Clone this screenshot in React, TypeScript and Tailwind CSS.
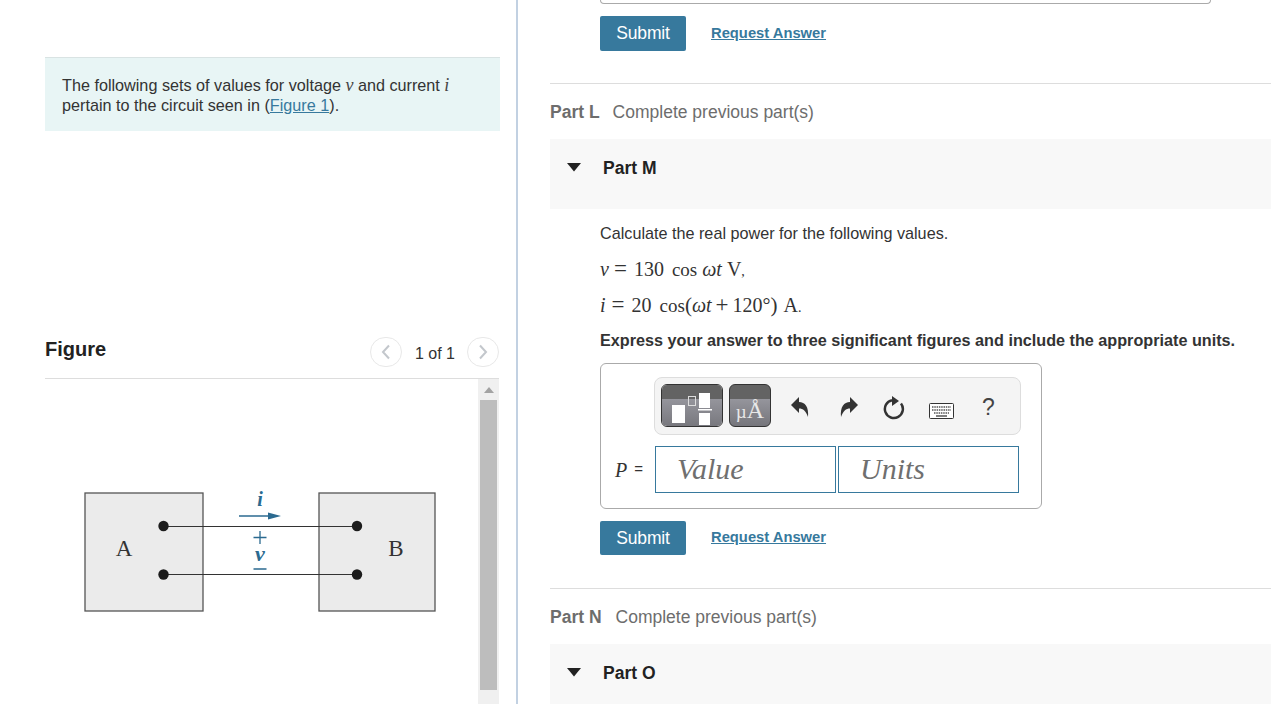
import React from "react";

const serif = "font-['Liberation_Serif',serif]";

const Actions: React.FC<{ btn: string; link: string }> = ({ btn, link }) => (
  <div className="flex items-start">
    <button className={`${btn} w-[86px] rounded-[2px] bg-[#37799d] text-[17.500px] tracking-[-0.2px] text-white`}>Submit</button>
    <a href="#" className={`${link} ml-[25px] text-[14.750px] font-bold text-[#37799d] underline`}>Request Answer</a>
  </div>
);

const LockedPart: React.FC<{ part: string; gap: string }> = ({ part, gap }) => (
  <div className="flex h-[56px] items-center border-t border-[#ddd] text-[17.500px] leading-[24px] text-[#6d6d6d]">
    <b className={gap}>{part}</b>
    <span>Complete previous part(s)</span>
  </div>
);

const PartHead: React.FC<{ name: string }> = ({ name }) => (
  <div className="flex h-[70px] items-start bg-[#f8f8f8] pl-[17px] pt-[18px]">
    <svg width="14" height="9" viewBox="0 0 14 9" className="mt-[6px]"><path d="M0 0H14L7 8.500Z" fill="#222" /></svg>
    <b className="ml-[22px] text-[17.500px] leading-[22px] text-[#222]">{name}</b>
  </div>
);

const Circuit: React.FC = () => (
  <svg width="400" height="160" viewBox="0 0 400 160" className="ml-[15px] mt-[91px] block">
    <rect x="25" y="23" width="118" height="118" fill="#ebebeb" stroke="#555" strokeWidth="1.300" />
    <rect x="259" y="23" width="116" height="118" fill="#ebebeb" stroke="#555" strokeWidth="1.300" />
    <path d="M103 56.500H297M103 104.500H297" stroke="#333" strokeWidth="1.200" />
    <circle cx="103.500" cy="56" r="5.200" fill="#1c1c1c" />
    <circle cx="103.500" cy="104.500" r="5.200" fill="#1c1c1c" />
    <circle cx="297" cy="56" r="5.200" fill="#1c1c1c" />
    <circle cx="297" cy="104.500" r="5.200" fill="#1c1c1c" />
    <text x="64" y="86" textAnchor="middle" fontFamily="Liberation Serif" fontSize="23" fill="#333">A</text>
    <text x="336" y="86" textAnchor="middle" fontFamily="Liberation Serif" fontSize="23" fill="#333">B</text>
    <text x="200" y="36" textAnchor="middle" fontFamily="Liberation Serif" fontStyle="italic" fontWeight="bold" fontSize="20" fill="#2b6a90">i</text>
    <path d="M179 46H212" stroke="#2b6a90" strokeWidth="1.300" />
    <path d="M208 42.500L221 46L208 49.500Z" fill="#2b6a90" />
    <path d="M193.500 67.500H206.500M200 61V74M193.500 99H206.500" stroke="#2b6a90" strokeWidth="1.300" />
    <text x="200" y="91" textAnchor="middle" fontFamily="Liberation Serif" fontStyle="italic" fontWeight="bold" fontSize="22" fill="#2b6a90">v</text>
  </svg>
);

const Toolbar: React.FC = () => (
  <div className="ml-[53px] mt-[13px] flex h-[58px] w-[367px] items-start rounded-[8px] border border-[#ddd] bg-[#f4f4f4] pl-[6px] pt-[6px]">
    <div className="h-[43px] w-[62px] overflow-hidden rounded-[6px] border border-[#333]">
      <svg width="62" height="43" viewBox="0 0 62 43" className="block">
        <defs>
          <linearGradient id="lower" x1="0" y1="0" x2="0" y2="1">
            <stop offset="0" stopColor="#95959c" />
            <stop offset="1" stopColor="#76767c" />
          </linearGradient>
        </defs>
        <rect width="62" height="14" fill="#636363" />
        <rect y="14" width="62" height="29" fill="url(#lower)" />
        <rect x="10" y="20" width="13" height="18" fill="#fff" />
        <rect x="26.500" y="11.500" width="7" height="9" fill="none" stroke="#ddd" />
        <rect x="37" y="8" width="11" height="15" fill="#fff" />
        <rect x="36" y="24" width="14" height="1.500" fill="#fff" />
        <rect x="37" y="28" width="11" height="12" fill="#fff" />
      </svg>
    </div>
    <div className="ml-[6px] flex h-[43px] w-[42px] items-end justify-center overflow-hidden rounded-[6px] border border-[#333] bg-[linear-gradient(#636363_14px,#95959c_14px,#76767c)]">
      <span className={`${serif} text-[#e8e8e8] leading-[27px]`}>
        <span className="text-[19px]">µ</span>
        <span className="text-[24px]">Å</span>
      </span>
    </div>
    <svg width="18" height="20" viewBox="0 0 18 20" className="ml-[20px] mt-[13px]">
      <path d="M0 8L8 0V5C14 5 18 10 17 20C15 14 12 11.500 8 11.500V16Z" fill="#333" />
    </svg>
    <svg width="18" height="20" viewBox="0 0 18 20" className="ml-[31px] mt-[13px]">
      <path d="M18 8L10 0V5C4 5 0 10 1 20C3 14 6 11.500 10 11.500V16Z" fill="#333" />
    </svg>
    <svg width="22" height="26" viewBox="0 0 22 26" className="ml-[25px] mt-[12px]">
      <path d="M9 4.200A9 9 0 1 0 18 7.500" fill="none" stroke="#333" strokeWidth="2.500" />
      <path d="M9 0L16 5L9 10Z" fill="#333" />
    </svg>
    <svg width="25" height="16" viewBox="0 0 25 16" className="ml-[24px] mt-[19px]">
      <rect x=".5" y=".5" width="24" height="15" rx="1" fill="#fff" stroke="#333" />
      <path d="M3 4H22M3 7H22M5 10H20" stroke="#555" strokeWidth="1.500" strokeDasharray="1.500 .8" />
      <path d="M7 13H18" stroke="#555" strokeWidth="1.500" />
    </svg>
    <span className="ml-[28px] mt-[10px] text-[23px] leading-[26px] text-[#444]">?</span>
  </div>
);

export default function App() {
  return (
    <div className="flex h-[704px] overflow-hidden bg-white font-['Liberation_Sans',Arial,sans-serif] text-[#333]">
      <div className="flex w-[516px] shrink-0 flex-col pl-[45px] pr-[16px] pt-[57px]">
        <div className="h-[74px] border-t border-[#d9e3e3] bg-[#e8f5f5] pl-[17px] pt-[17px] text-[16.200px] leading-[20px]">
          The following sets of values for voltage <i className={`${serif} text-[18px] leading-none text-[#444]`}>v</i> and current <i className={`${serif} text-[18px] leading-none text-[#444]`}>i</i>
          <br />
          pertain to the circuit seen in (<a href="#" className="text-[#37799d] underline">Figure 1</a>).
        </div>
        <div className="mr-[1px] mt-[205px] flex h-[43px] items-start border-b border-[#ddd] pt-[1px]">
          <b className="text-[20px] leading-[24px] text-[#222]">Figure</b>
          <div className="ml-auto flex items-center">
            <span className="flex h-[30px] w-[32px] items-center justify-center rounded-full border border-[#e8e8e8]">
              <svg width="10" height="16" viewBox="0 0 10 16"><path d="M8 1.500L2 8L8 14.500" fill="none" stroke="#c3c7cc" strokeWidth="2" /></svg>
            </span>
            <span className="ml-[13px] mt-[4px] text-[16px]">1 of 1</span>
            <span className="ml-[12px] flex h-[30px] w-[32px] items-center justify-center rounded-full border border-[#e8e8e8]">
              <svg width="10" height="16" viewBox="0 0 10 16"><path d="M2 1.500L8 8L2 14.500" fill="none" stroke="#c3c7cc" strokeWidth="2" /></svg>
            </span>
          </div>
        </div>
        <div className="mr-[1px] flex min-h-0 flex-1">
          <div className="min-w-0 flex-1"><Circuit /></div>
          <div className="flex w-[21px] flex-col items-center bg-[#f0f0f0] pt-[8px]">
            <svg width="10" height="6" viewBox="0 0 10 6" className="shrink-0"><path d="M0 6L5 0L10 6Z" fill="#a3a3a3" /></svg>
            <div className="mt-[7px] h-[290px] w-[17px] shrink-0 bg-[#bdbdbd]" />
          </div>
        </div>
      </div>

      <div className="min-w-0 flex-1 border-l-2 border-[#c2d1e2] pl-[32px]">
        <div className="ml-[50px] h-[4px] w-[611px] rounded-b-[6px] border-x border-b border-[#aaa]" />
        <div className="ml-[50px] mt-[12px]"><Actions btn="h-[35px]" link="mt-[6px]" /></div>
        <div className="mt-[32px]"><LockedPart part="Part L" gap="mr-[13px]" /></div>
        <PartHead name="Part M" />

        <div className="pl-[50px]">
          <p className="mt-[14px] text-[16.200px] leading-[20px]">Calculate the real power for the following values.</p>
          <p className={`${serif} mt-[8px] flex h-[36px] items-baseline text-[20px] leading-[36px]`}>
            <i>v</i>
            <span className="ml-[5px] text-[23px]">=</span>
            <span className="ml-[7px]">130</span>
            <span className="ml-[8px] text-[19px]">cos</span>
            <i className="ml-[5px]">ωt</i>
            <span className="ml-[5px]">V</span>
            <span className="text-[14px]">,</span>
          </p>
          <p className={`${serif} flex h-[36px] items-baseline text-[20px] leading-[36px]`}>
            <i>i</i>
            <span className="ml-[6px] text-[23px]">=</span>
            <span className="ml-[7px]">20</span>
            <span className="ml-[8px] text-[19px]">cos</span>
            <span className="text-[21px]">(</span>
            <i>ωt</i>
            <span className="ml-[4px] text-[23px]">+</span>
            <span className="ml-[4px]">120°</span>
            <span className="text-[21px]">)</span>
            <span className="ml-[6px]">A</span>
            <span className="text-[14px]">.</span>
          </p>
          <p className="mt-[7px] text-[16.200px] font-bold leading-[20px]">Express your answer to three significant figures and include the appropriate units.</p>

          <div className="mt-[13px] h-[146px] w-[442px] rounded-[6px] border border-[#aaa]">
            <Toolbar />
            <div className="ml-[14px] mt-[11px] flex h-[47px] items-center">
              <span className={`${serif} text-[20px] italic`}>P</span>
              <span className="ml-[7px] text-[15px]">=</span>
              <div className={`${serif} ml-[12px] flex h-[47px] w-[181px] items-center border border-[#37799d] pb-[2px] pl-[21px] text-[30px] italic text-[#6f6f6f]`}>Value</div>
              <div className={`${serif} ml-[2px] flex h-[47px] w-[181px] items-center border border-[#37799d] pb-[2px] pl-[21px] text-[30px] italic text-[#6f6f6f]`}>Units</div>
            </div>
          </div>

          <div className="mt-[12px]"><Actions btn="h-[34px]" link="mt-[5px]" /></div>
        </div>

        <div className="mt-[33px]"><LockedPart part="Part N" gap="mr-[14px]" /></div>
        <PartHead name="Part O" />
      </div>
    </div>
  );
}
